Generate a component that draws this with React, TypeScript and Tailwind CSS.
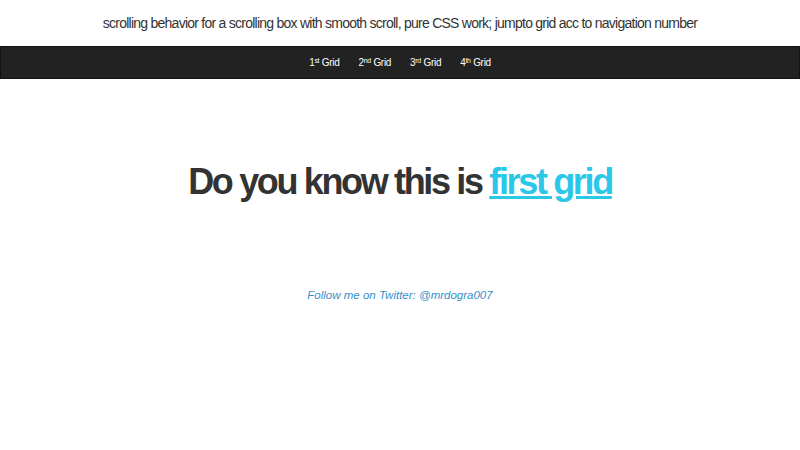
export default function App() {
  const items = [
    { n: "1", s: "st" },
    { n: "2", s: "nd" },
    { n: "3", s: "rd" },
    { n: "4", s: "th" },
  ];
  return (
    <div className="min-h-[450px] bg-white font-['Liberation_Sans',Arial,sans-serif]">
      <header className="h-[46px] flex items-center justify-center">
        <h1 className="text-[14px] text-[#333] tracking-[-0.75px]">
          scrolling behavior for a scrolling box with smooth scroll, pure CSS work; jumpto grid acc to navigation number
        </h1>
      </header>
      <nav className="h-[33px] bg-[#222] border border-[#111] flex items-center justify-center gap-[19px]">
        {items.map((it) => (
          <a key={it.n} href="#" className="text-[10px] text-white tracking-[-0.3px]">
            {it.n}
            <sup className="text-[7px]">{it.s}</sup> Grid
          </a>
        ))}
      </nav>
      <main className="flex flex-col items-center">
        <h2 className="mt-[81px] text-[36px] font-bold text-[#333] tracking-[-2.35px] leading-[44px]">
          Do you know this is{" "}
          <a href="#" className="text-[#2bc7e8] underline">
            first grid
          </a>
        </h2>
        <p className="mt-[83px] text-[11.5px] italic text-[#3490c9]">
          Follow me on Twitter: @mrdogra007
        </p>
      </main>
    </div>
  );
}
